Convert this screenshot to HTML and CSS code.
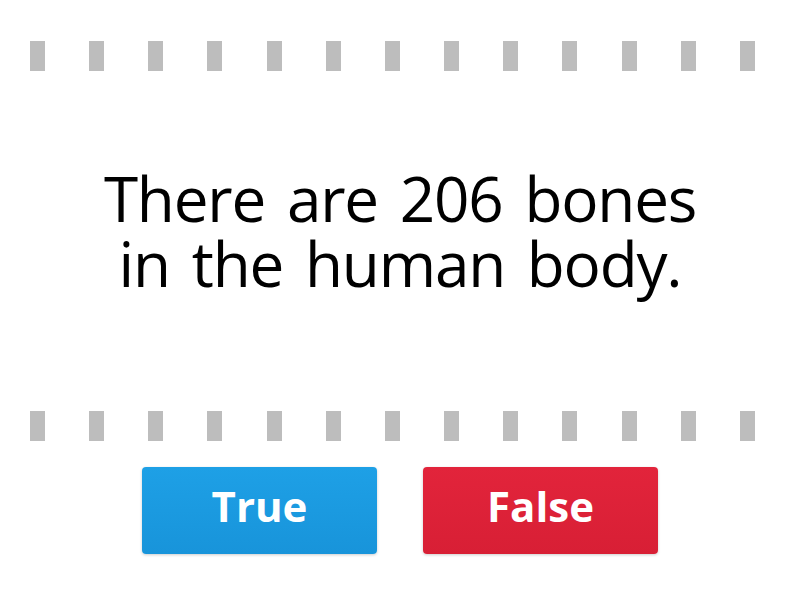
FILE: index.html
```html
<!DOCTYPE html>
<html lang="en">
<head>
    <meta charset="UTF-8">
    <meta name="viewport" content="width=device-width, initial-scale=1.0">
    <title>True or False</title>
    <link rel="stylesheet" href="styles.css">
</head>
<body>
    <div class="quiz">
        <div class="ticks">
            <span></span><span></span><span></span><span></span><span></span>
            <span></span><span></span><span></span><span></span><span></span>
            <span></span><span></span><span></span>
        </div>

        <div class="question">
            <p>There are 206 bones<br>in the human body.</p>
        </div>

        <div class="ticks">
            <span></span><span></span><span></span><span></span><span></span>
            <span></span><span></span><span></span><span></span><span></span>
            <span></span><span></span><span></span>
        </div>

        <div class="answers">
            <button class="answer true">True</button>
            <button class="answer false">False</button>
        </div>
    </div>
</body>
</html>
```

FILE: styles.css
```css
body {
    margin: 0;
    background: #fff;
    font-family: "Open Sans", "Noto Sans", sans-serif;
    color: #000;
}

.quiz {
    width: 800px;
    height: 600px;
    padding-top: 41px;
    box-sizing: border-box;
}

.ticks {
    display: flex;
    gap: 44.17px;
    padding-left: 30px;
}

.ticks span {
    width: 15px;
    height: 30px;
    background: #bdbdbd;
}

.question {
    height: 320px;
    padding-bottom: 20px;
    display: flex;
    align-items: center;
    justify-content: center;
}

.question p {
    margin: 0;
    font-size: 62px;
    line-height: 65px;
    text-align: center;
    letter-spacing: -1.2px;
    word-spacing: 7px;
}

.answers {
    display: flex;
    justify-content: center;
    gap: 46px;
    margin-top: 26px;
}

.answer {
    width: 235px;
    height: 87px;
    padding: 0 0 10px;
    border: none;
    border-radius: 4px;
    font-family: "Open Sans", sans-serif;
    font-weight: 700;
    font-size: 42px;
    color: #fff;
    box-shadow: 0 1px 3px rgba(0, 0, 0, 0.2);
}

.true {
    background: linear-gradient(#1ea0e6, #1894da);
}

.false {
    background: linear-gradient(#e2243b, #d81f35);
}
```
